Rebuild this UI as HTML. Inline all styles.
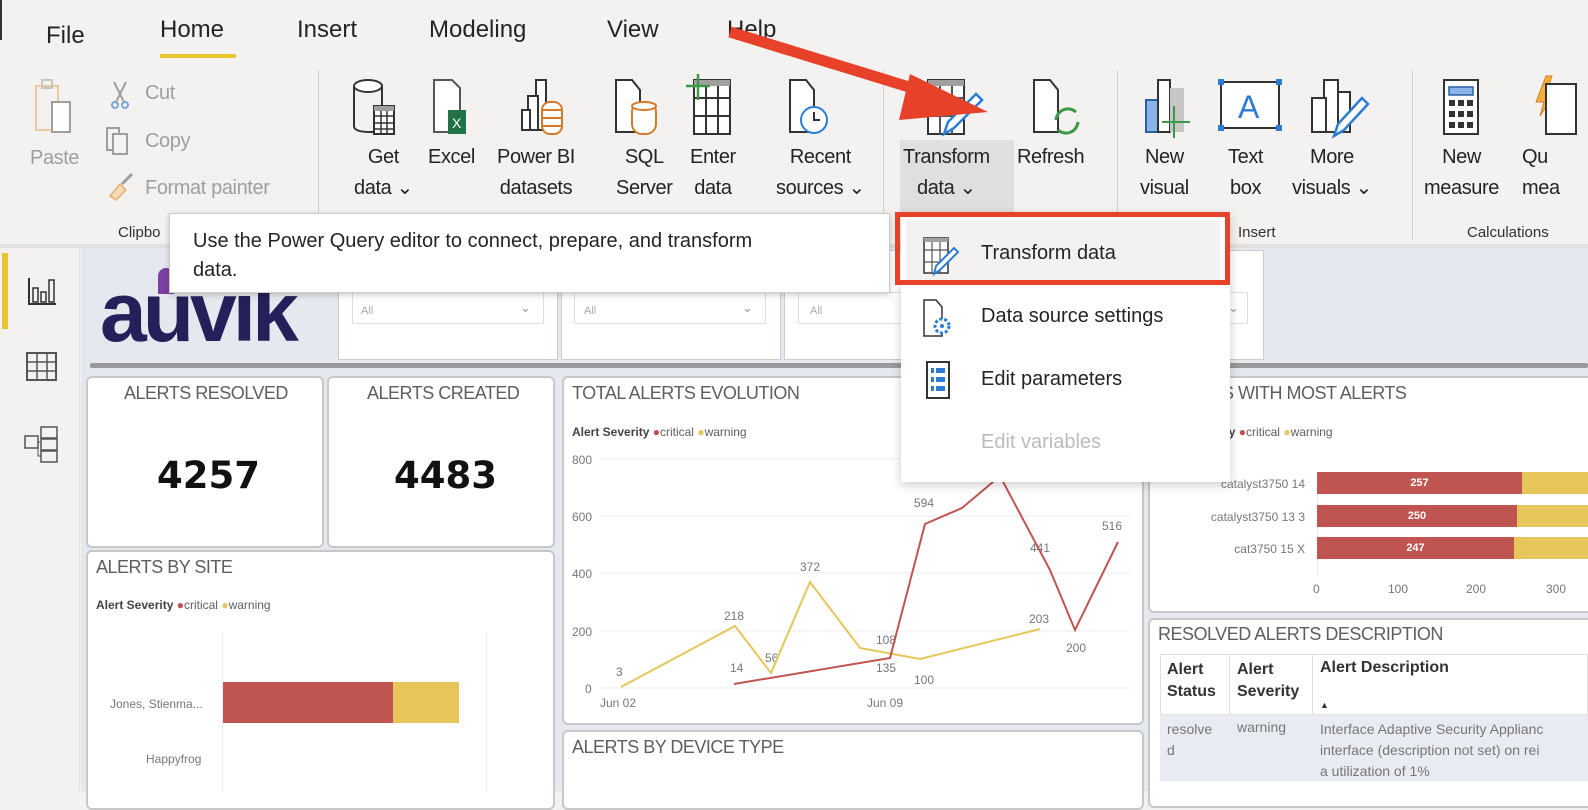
<!DOCTYPE html>
<html><head><meta charset="utf-8"><style>
*{margin:0;padding:0;box-sizing:border-box}
body{width:1588px;height:791px;overflow:hidden;background:#f3f2f1;font-family:"Liberation Sans",sans-serif;position:relative;color:#252423}
.a{position:absolute}
.tab{position:absolute;top:16px;font-size:24px;color:#252423}
.lbl{position:absolute;font-size:20px;color:#252423;text-align:center;line-height:31px;white-space:nowrap;letter-spacing:-0.4px}
.dis{color:#a19f9d}
.sep{position:absolute;top:70px;width:1px;height:170px;background:#d2d0ce}
.grp{position:absolute;top:224px;font-size:15px;color:#323130}
.card{position:absolute;background:#fff;border:2px solid #c8c8c8;border-radius:6px}
.ttl{position:absolute;font-size:18px;color:#605e5c;letter-spacing:-0.5px}
.small{font-size:12px;color:#605e5c}
svg{position:absolute;overflow:visible}
</style></head><body>
<div class="a" style="left:0;top:0;width:2px;height:40px;background:#333"></div>
<!-- tabs -->
<div class="tab" style="left:46px;top:22px">File</div>
<div class="tab" style="left:160px">Home</div>
<div class="a" style="left:160px;top:54px;width:76px;height:4px;background:#e8c42e"></div>
<div class="tab" style="left:297px">Insert</div>
<div class="tab" style="left:429px">Modeling</div>
<div class="tab" style="left:607px">View</div>
<div class="tab" style="left:727px">Help</div>

<!-- clipboard -->
<svg style="left:30px;top:78px" width="60" height="60"><rect x="6" y="8" width="22" height="44" fill="none" stroke="#e9c9a0" stroke-width="2"/><rect x="12" y="2" width="10" height="8" fill="none" stroke="#c8c6c4" stroke-width="2"/><rect x="22" y="24" width="18" height="30" fill="#fff" stroke="#a19f9d" stroke-width="2"/></svg>
<div class="lbl dis" style="left:30px;top:143px">Paste</div>
<svg style="left:108px;top:80px" width="24" height="30"><path d="M6 2 L16 22 M18 2 L8 22" stroke="#a19f9d" stroke-width="2"/><circle cx="7" cy="25" r="3" fill="none" stroke="#7aa7d6" stroke-width="2"/><circle cx="17" cy="25" r="3" fill="none" stroke="#7aa7d6" stroke-width="2"/></svg>
<div class="lbl dis" style="left:145px;top:78px">Cut</div>
<svg style="left:105px;top:126px" width="28" height="32"><rect x="2" y="2" width="12" height="22" fill="none" stroke="#a19f9d" stroke-width="2"/><rect x="8" y="8" width="14" height="20" fill="#f3f2f1" stroke="#a19f9d" stroke-width="2"/></svg>
<div class="lbl dis" style="left:145px;top:126px">Copy</div>
<svg style="left:106px;top:172px" width="30" height="30"><path d="M4 24 L14 12 L20 18 L10 28 Z" fill="#f5dbb8" stroke="#e0b078" stroke-width="1.5"/><path d="M16 12 L26 2" stroke="#a19f9d" stroke-width="3"/></svg>
<div class="lbl dis" style="left:145px;top:173px">Format painter</div>
<div class="grp" style="left:118px">Clipbo</div>
<div class="sep" style="left:318px"></div>

<!-- data group icons -->
<svg style="left:352px;top:78px" width="60" height="60"><path d="M2 8 V48 Q2 54 18 54 H24" fill="none" stroke="#333" stroke-width="2"/><ellipse cx="16" cy="8" rx="14" ry="6" fill="#fff" stroke="#333" stroke-width="2"/><path d="M30 8 V28" stroke="#333" stroke-width="2"/><rect x="22" y="28" width="20" height="28" fill="#fff" stroke="#333" stroke-width="2"/><rect x="22" y="28" width="20" height="5" fill="#a19f9d"/><path d="M22 38 H42 M22 45 H42 M22 51 H42 M29 33 V56 M35 33 V56" stroke="#333" stroke-width="1.5"/></svg>
<div class="lbl" style="left:354px;top:142px">Get<br>data ⌄</div>
<svg style="left:432px;top:78px" width="50" height="60"><path d="M2 2 H20 L28 10 V54 H2 Z" fill="#fff" stroke="#555" stroke-width="2"/><rect x="16" y="32" width="18" height="24" fill="#217346"/><text x="20" y="50" font-size="14" fill="#fff" font-family="Liberation Sans">X</text></svg>
<div class="lbl" style="left:428px;top:142px">Excel</div>
<svg style="left:522px;top:78px" width="60" height="60"><rect x="14" y="2" width="10" height="50" fill="#fff" stroke="#333" stroke-width="2"/><rect x="6" y="18" width="10" height="34" fill="#fff" stroke="#333" stroke-width="2"/><rect x="0" y="32" width="8" height="20" fill="#fff" stroke="#333" stroke-width="2"/><rect x="20" y="24" width="20" height="32" rx="8" fill="#fff" stroke="#d47b2a" stroke-width="2"/><path d="M20 32 H40 M20 40 H40 M20 48 H40" stroke="#d47b2a" stroke-width="2"/></svg>
<div class="lbl" style="left:497px;top:142px">Power BI<br>datasets</div>
<svg style="left:614px;top:78px" width="60" height="60"><path d="M2 2 H18 L26 12 V54 H2 Z" fill="#fff" stroke="#333" stroke-width="2"/><rect x="18" y="24" width="24" height="32" rx="10" fill="#fff" stroke="#d47b2a" stroke-width="2"/><ellipse cx="30" cy="28" rx="12" ry="4" fill="#fff" stroke="#d47b2a" stroke-width="2"/></svg>
<div class="lbl" style="left:616px;top:142px">SQL<br>Server</div>
<svg style="left:686px;top:74px" width="60" height="64"><rect x="8" y="6" width="36" height="54" fill="#fff" stroke="#333" stroke-width="2"/><rect x="8" y="6" width="36" height="6" fill="#a19f9d"/><path d="M8 24 H44 M8 42 H44 M20 12 V60 M32 12 V60" stroke="#333" stroke-width="2"/><path d="M12 0 V26 M0 12 H24" stroke="#3a9a4a" stroke-width="2.5"/></svg>
<div class="lbl" style="left:690px;top:142px">Enter<br>data</div>
<svg style="left:788px;top:78px" width="60" height="60"><path d="M2 2 H18 L26 12 V54 H2 Z" fill="#fff" stroke="#333" stroke-width="2"/><circle cx="26" cy="42" r="13" fill="#fff" stroke="#2b7cd3" stroke-width="2"/><path d="M26 34 V42 H32" stroke="#333" stroke-width="2" fill="none"/></svg>
<div class="lbl" style="left:776px;top:142px">Recent<br>sources ⌄</div>
<div class="sep" style="left:883px"></div>

<!-- queries -->
<div class="a" style="left:900px;top:140px;width:114px;height:72px;background:#e1dfdd"></div>
<svg style="left:926px;top:78px" width="64" height="60"><rect x="2" y="2" width="36" height="54" fill="#fff" stroke="#333" stroke-width="2"/><rect x="2" y="2" width="36" height="6" fill="#a19f9d"/><path d="M2 20 H38 M2 38 H38 M14 8 V56 M26 8 V56" stroke="#555" stroke-width="2"/><path d="M18 56 L22 44 L50 16 L56 22 L28 50 Z" fill="#fff" stroke="#2b7cd3" stroke-width="2.5"/></svg>
<div class="lbl" style="left:903px;top:142px">Transform<br>data ⌄</div>
<svg style="left:1032px;top:78px" width="60" height="60"><path d="M2 2 H18 L26 12 V54 H2 Z" fill="#fff" stroke="#333" stroke-width="2"/><path d="M24 42 A12 12 0 0 1 44 34 M46 44 A12 12 0 0 1 26 52" fill="none" stroke="#3a9a4a" stroke-width="3"/></svg>
<div class="lbl" style="left:1017px;top:142px">Refresh</div>
<div class="sep" style="left:1117px"></div>

<!-- insert -->
<svg style="left:1144px;top:78px" width="60" height="60"><rect x="2" y="22" width="14" height="32" fill="#8ab4e8" stroke="#2b5fa8" stroke-width="2"/><rect x="14" y="2" width="12" height="52" fill="#fff" stroke="#333" stroke-width="2"/><rect x="26" y="10" width="14" height="44" fill="#c8c6c4"/><path d="M30 28 V60 M18 44 H46" stroke="#3a9a4a" stroke-width="2"/></svg>
<div class="lbl" style="left:1140px;top:142px">New<br>visual</div>
<svg style="left:1218px;top:78px" width="66" height="56"><rect x="3" y="4" width="58" height="46" fill="#fff" stroke="#333" stroke-width="2"/><rect x="0" y="1" width="6" height="6" fill="#2b7cd3"/><rect x="58" y="1" width="6" height="6" fill="#2b7cd3"/><rect x="0" y="47" width="6" height="6" fill="#2b7cd3"/><rect x="58" y="47" width="6" height="6" fill="#2b7cd3"/><text x="20" y="40" font-size="32" fill="#2b7cd3" font-family="Liberation Sans">A</text></svg>
<div class="lbl" style="left:1228px;top:142px">Text<br>box</div>
<svg style="left:1310px;top:78px" width="66" height="60"><rect x="14" y="2" width="14" height="52" fill="#fff" stroke="#333" stroke-width="2"/><rect x="2" y="20" width="14" height="34" fill="#fff" stroke="#333" stroke-width="2"/><rect x="28" y="14" width="12" height="40" fill="#fff" stroke="#333" stroke-width="2"/><path d="M24 58 L28 46 L52 20 L58 26 L34 52 Z" fill="#fff" stroke="#2b7cd3" stroke-width="2.5"/></svg>
<div class="lbl" style="left:1292px;top:142px">More<br>visuals ⌄</div>
<div class="grp" style="left:1238px">Insert</div>
<div class="sep" style="left:1412px"></div>

<svg style="left:1442px;top:78px" width="40" height="60"><rect x="2" y="2" width="34" height="54" fill="#fff" stroke="#333" stroke-width="2"/><rect x="7" y="9" width="24" height="8" fill="#8ab4e8" stroke="#2b5fa8" stroke-width="1.5"/><g fill="#333"><rect x="7" y="22" width="6" height="6"/><rect x="16" y="22" width="6" height="6"/><rect x="25" y="22" width="6" height="6"/><rect x="7" y="33" width="6" height="6"/><rect x="16" y="33" width="6" height="6"/><rect x="25" y="33" width="6" height="6"/><rect x="7" y="44" width="6" height="6"/><rect x="16" y="44" width="6" height="6"/><rect x="25" y="44" width="6" height="6"/></g></svg>
<div class="lbl" style="left:1424px;top:142px">New<br>measure</div>
<svg style="left:1532px;top:74px" width="60" height="64"><path d="M14 2 L4 28 H12 L8 42 L22 20 H14 L20 2 Z" fill="#f5b03a" stroke="#d47b2a"/><rect x="14" y="10" width="30" height="50" fill="#fff" stroke="#333" stroke-width="2"/></svg>
<div class="lbl" style="left:1522px;top:142px;text-align:left">Qu<br>mea</div>
<div class="grp" style="left:1467px">Calculations</div>

<div class="a" style="left:0;top:244px;width:1588px;height:4px;background:#e1dfdd"></div>

<!-- left nav -->
<div class="a" style="left:0;top:248px;width:80px;height:543px;background:#f3f2f1;border-right:1px solid #e1dfdd"></div>
<div class="a" style="left:2px;top:253px;width:6px;height:76px;background:#e8c42e"></div>
<svg style="left:28px;top:278px" width="30" height="28"><path d="M1 0 V26 H28" fill="none" stroke="#333" stroke-width="2"/><rect x="5" y="10" width="5" height="14" fill="none" stroke="#333" stroke-width="1.5"/><rect x="13" y="14" width="5" height="10" fill="none" stroke="#333" stroke-width="1.5"/><rect x="21" y="2" width="5" height="22" fill="none" stroke="#333" stroke-width="1.5"/></svg>
<svg style="left:26px;top:352px" width="32" height="30"><rect x="1" y="1" width="29" height="27" fill="none" stroke="#555" stroke-width="2"/><path d="M1 10 H30 M1 19 H30 M11 1 V28 M21 1 V28" stroke="#555" stroke-width="1.5"/></svg>
<svg style="left:24px;top:426px" width="36" height="38"><rect x="1" y="10" width="13" height="12" fill="none" stroke="#555" stroke-width="1.5"/><rect x="17" y="1" width="16" height="11" fill="none" stroke="#555" stroke-width="1.5"/><rect x="17" y="13" width="16" height="11" fill="none" stroke="#555" stroke-width="1.5"/><rect x="17" y="25" width="16" height="11" fill="none" stroke="#555" stroke-width="1.5"/><path d="M14 16 H17 M14 16 V30 H17" stroke="#555" fill="none"/></svg>

<!-- canvas -->
<div class="a" style="left:81px;top:248px;width:1507px;height:543px;background:#e6e8ef"></div>
<div class="a" style="left:90px;top:363px;width:1498px;height:5px;background:#999;border-radius:2px"></div>
<div class="a" style="left:158px;top:268px;width:16px;height:26px;background:#7d3fa0;border-radius:10px 10px 0 0"></div>
<div class="a" style="left:100px;top:270px;font-size:84px;font-weight:bold;color:#26205a;letter-spacing:-4px;font-family:'Liberation Sans',sans-serif;line-height:84px">auvik</div>
<!-- slicers -->
<div class="a" style="left:338px;top:250px;width:220px;height:110px;background:#fff;border:1px solid #ccc"></div>
<div class="a" style="left:352px;top:292px;width:192px;height:32px;border:1px solid #e1dfdd"></div><div class="a small" style="left:361px;top:305px;font-size:11px;color:#aaa">All</div><div class="a" style="left:520px;top:300px;color:#999;font-size:13px">⌄</div>
<div class="a" style="left:561px;top:250px;width:220px;height:110px;background:#fff;border:1px solid #ccc"></div>
<div class="a" style="left:574px;top:292px;width:192px;height:32px;border:1px solid #e1dfdd"></div><div class="a small" style="left:584px;top:305px;font-size:11px;color:#aaa">All</div><div class="a" style="left:742px;top:300px;color:#999;font-size:13px">⌄</div>
<div class="a" style="left:784px;top:250px;width:480px;height:110px;background:#fff;border:1px solid #ccc"></div>
<div class="a" style="left:798px;top:292px;width:450px;height:32px;border:1px solid #e1dfdd"></div><div class="a small" style="left:810px;top:305px;font-size:11px;color:#aaa">All</div><div class="a" style="left:1228px;top:300px;color:#999;font-size:13px">⌄</div>

<!-- kpi cards -->
<div class="card" style="left:86px;top:376px;width:238px;height:172px"></div>
<div class="ttl" style="left:124px;top:383px">ALERTS RESOLVED</div>
<div class="a" style="left:157px;top:454px;font-size:37px;font-weight:bold;color:#111;font-family:'DejaVu Sans',sans-serif">4257</div>
<div class="card" style="left:327px;top:376px;width:228px;height:172px"></div>
<div class="ttl" style="left:367px;top:383px">ALERTS CREATED</div>
<div class="a" style="left:394px;top:454px;font-size:37px;font-weight:bold;color:#111;font-family:'DejaVu Sans',sans-serif">4483</div>

<div class="card" style="left:86px;top:550px;width:469px;height:260px"></div>
<div class="ttl" style="left:96px;top:557px">ALERTS BY SITE</div>
<div class="a small" style="left:96px;top:598px;font-size:12px"><b style="color:#444">Alert Severity</b> <span style="color:#c0504d">●</span>critical <span style="color:#e6c65a">●</span>warning</div>
<div class="a" style="left:222px;top:632px;width:1px;height:160px;background:#eee"></div>
<div class="a" style="left:486px;top:632px;width:1px;height:160px;background:#eee"></div>
<div class="a" style="left:223px;top:682px;width:170px;height:41px;background:#bf5450"></div>
<div class="a" style="left:393px;top:682px;width:66px;height:41px;background:#e6c65a"></div>
<div class="a" style="left:110px;top:697px;font-size:12px;color:#777">Jones, Stienma...</div>
<div class="a" style="left:146px;top:752px;font-size:12px;color:#777">Happyfrog</div>

<!-- evolution -->
<div class="card" style="left:562px;top:376px;width:582px;height:349px"></div>
<div class="ttl" style="left:572px;top:383px">TOTAL ALERTS EVOLUTION</div>
<div class="a small" style="left:572px;top:425px"><b style="color:#444">Alert Severity</b> <span style="color:#c0504d">●</span>critical <span style="color:#e6c65a">●</span>warning</div>
<svg style="left:0;top:0" width="1588" height="791">
<g stroke="#eee" stroke-width="1"><line x1="600" y1="459" x2="1130" y2="459"/><line x1="600" y1="516" x2="1130" y2="516"/><line x1="600" y1="573" x2="1130" y2="573"/><line x1="600" y1="631" x2="1130" y2="631"/><line x1="600" y1="688" x2="1130" y2="688"/></g>
<g font-size="12" fill="#777" font-family="Liberation Sans"><text x="572" y="464">800</text><text x="572" y="521">600</text><text x="572" y="578">400</text><text x="572" y="636">200</text><text x="585" y="693">0</text><text x="600" y="707">Jun 02</text><text x="867" y="707">Jun 09</text>
<text x="616" y="676">3</text><text x="724" y="620">218</text><text x="730" y="672">14</text><text x="765" y="662">56</text><text x="800" y="571">372</text><text x="876" y="644">108</text><text x="876" y="672">135</text><text x="914" y="684">100</text><text x="914" y="507">594</text><text x="1030" y="552">441</text><text x="1029" y="623">203</text><text x="1066" y="652">200</text><text x="1102" y="530">516</text></g>
<polyline points="621,687 735,626 771,673 810,582 860,648 920,659 1040,629" fill="none" stroke="#e6c65a" stroke-width="2"/>
<polyline points="734,684 890,658 925,524 962,508 1000,476 1050,570 1075,630 1118,542" fill="none" stroke="#bf5450" stroke-width="2"/>
</svg>
<div class="card" style="left:562px;top:730px;width:582px;height:80px"></div>
<div class="ttl" style="left:572px;top:737px">ALERTS BY DEVICE TYPE</div>

<!-- devices -->
<div class="card" style="left:1148px;top:376px;width:460px;height:237px"></div>
<div class="ttl" style="left:1158px;top:383px">DEVICES WITH MOST ALERTS</div>
<div class="a small" style="left:1158px;top:425px"><b style="color:#444">Alert Severity</b> <span style="color:#c0504d">●</span>critical <span style="color:#e6c65a">●</span>warning</div>
<div class="a" style="left:1317px;top:472px;width:271px;height:106px;border-left:1px solid #eee"></div>
<div class="a" style="left:1317px;top:472px;width:205px;height:22px;background:#bf5450;color:#fff;font-size:11px;font-weight:bold;text-align:center;line-height:22px">257</div><div class="a" style="left:1522px;top:472px;width:66px;height:22px;background:#e6c65a"></div>
<div class="a" style="left:1317px;top:505px;width:200px;height:22px;background:#bf5450;color:#fff;font-size:11px;font-weight:bold;text-align:center;line-height:22px">250</div><div class="a" style="left:1517px;top:505px;width:71px;height:22px;background:#e6c65a"></div>
<div class="a" style="left:1317px;top:537px;width:197px;height:22px;background:#bf5450;color:#fff;font-size:11px;font-weight:bold;text-align:center;line-height:22px">247</div><div class="a" style="left:1514px;top:537px;width:74px;height:22px;background:#e6c65a"></div>
<div class="a" style="left:1150px;top:477px;width:155px;text-align:right;font-size:12px;color:#777">catalyst3750 14</div>
<div class="a" style="left:1150px;top:510px;width:155px;text-align:right;font-size:12px;color:#777">catalyst3750 13 3</div>
<div class="a" style="left:1150px;top:542px;width:155px;text-align:right;font-size:12px;color:#777">cat3750 15 X</div>
<div class="a" style="left:1313px;top:582px;font-size:12px;color:#777">0</div><div class="a" style="left:1388px;top:582px;font-size:12px;color:#777">100</div><div class="a" style="left:1466px;top:582px;font-size:12px;color:#777">200</div><div class="a" style="left:1546px;top:582px;font-size:12px;color:#777">300</div>

<div class="card" style="left:1148px;top:618px;width:460px;height:190px"></div>
<div class="ttl" style="left:1158px;top:624px">RESOLVED ALERTS DESCRIPTION</div>
<div class="a" style="left:1160px;top:654px;width:428px;height:61px;border:1px solid #e1dfdd;background:#fff"></div>
<div class="a" style="left:1229px;top:654px;width:1px;height:126px;background:#e1dfdd"></div>
<div class="a" style="left:1312px;top:654px;width:1px;height:126px;background:#e1dfdd"></div>
<div class="a" style="left:1167px;top:659px;font-size:16px;font-weight:bold;color:#333;line-height:22px">Alert<br>Status</div>
<div class="a" style="left:1237px;top:659px;font-size:16px;font-weight:bold;color:#333;line-height:22px">Alert<br>Severity</div>
<div class="a" style="left:1320px;top:659px;font-size:16px;font-weight:bold;color:#333">Alert Description</div>
<div class="a" style="left:1320px;top:700px;font-size:9px;color:#333">▲</div>
<div class="a" style="left:1160px;top:715px;width:428px;height:66px;background:#e9ebf3"></div>
<div class="a" style="left:1167px;top:719px;font-size:14px;color:#777;line-height:21px">resolve<br>d</div>
<div class="a" style="left:1237px;top:719px;font-size:14px;color:#777">warning</div>
<div class="a" style="left:1320px;top:719px;font-size:14px;color:#777;line-height:21px;white-space:nowrap">Interface Adaptive Security Applianc<br>interface (description not set) on rei<br>a utilization of 1%</div>

<!-- tooltip -->
<div class="a" style="left:169px;top:213px;width:721px;height:80px;background:#fff;border:1px solid #ccc;box-shadow:0 2px 6px rgba(0,0,0,.2)"></div>
<div class="a" style="left:193px;top:227px;font-size:20px;color:#252423;line-height:29px">Use the Power Query editor to connect, prepare, and transform<br>data.</div>

<!-- dropdown -->
<div class="a" style="left:901px;top:212px;width:329px;height:270px;background:#fff;box-shadow:0 3px 10px rgba(0,0,0,.2)"></div>
<div class="a" style="left:906px;top:220px;width:314px;height:62px;background:#f3f2f1"></div>
<div class="a" style="left:895px;top:212px;width:335px;height:73px;border:5px solid #e8412a"></div>
<svg style="left:922px;top:236px" width="40" height="40"><rect x="2" y="2" width="24" height="35" fill="#fff" stroke="#333" stroke-width="1.5"/><rect x="2" y="2" width="24" height="4" fill="#a19f9d"/><path d="M2 14 H26 M2 26 H26 M10 6 V37 M18 6 V37" stroke="#555" stroke-width="1.2"/><path d="M12 38 L14 30 L32 12 L36 16 L18 34 Z" fill="#fff" stroke="#2b7cd3" stroke-width="2"/></svg>
<div class="a" style="left:981px;top:242px;font-size:20px;color:#252423">Transform data</div>
<svg style="left:922px;top:298px" width="40" height="42"><path d="M2 2 H14 L20 9 V38 H2 Z" fill="#fff" stroke="#333" stroke-width="1.5"/><circle cx="20" cy="28" r="7" fill="#fff" stroke="#2b7cd3" stroke-width="3" stroke-dasharray="3 2"/><circle cx="20" cy="28" r="2" fill="#2b7cd3"/></svg>
<div class="a" style="left:981px;top:305px;font-size:20px;color:#252423">Data source settings</div>
<svg style="left:926px;top:361px" width="30" height="40"><rect x="1" y="1" width="22" height="36" fill="#fff" stroke="#333" stroke-width="2"/><g fill="#2b7cd3"><rect x="10" y="7" width="9" height="5"/><rect x="10" y="16" width="9" height="5"/><rect x="10" y="25" width="9" height="5"/><rect x="5" y="7" width="3" height="5"/><rect x="5" y="16" width="3" height="5"/><rect x="5" y="25" width="3" height="5"/></g></svg>
<div class="a" style="left:981px;top:368px;font-size:20px;color:#252423">Edit parameters</div>
<div class="a" style="left:981px;top:431px;font-size:20px;color:#bdbbb9">Edit variables</div>

<!-- arrow -->
<svg style="left:0;top:0" width="1588" height="791"><line x1="730" y1="32" x2="935" y2="95" stroke="#e8412a" stroke-width="11"/><polygon points="910,74 988,112 899,120" fill="#e8412a"/></svg>
</body></html>
